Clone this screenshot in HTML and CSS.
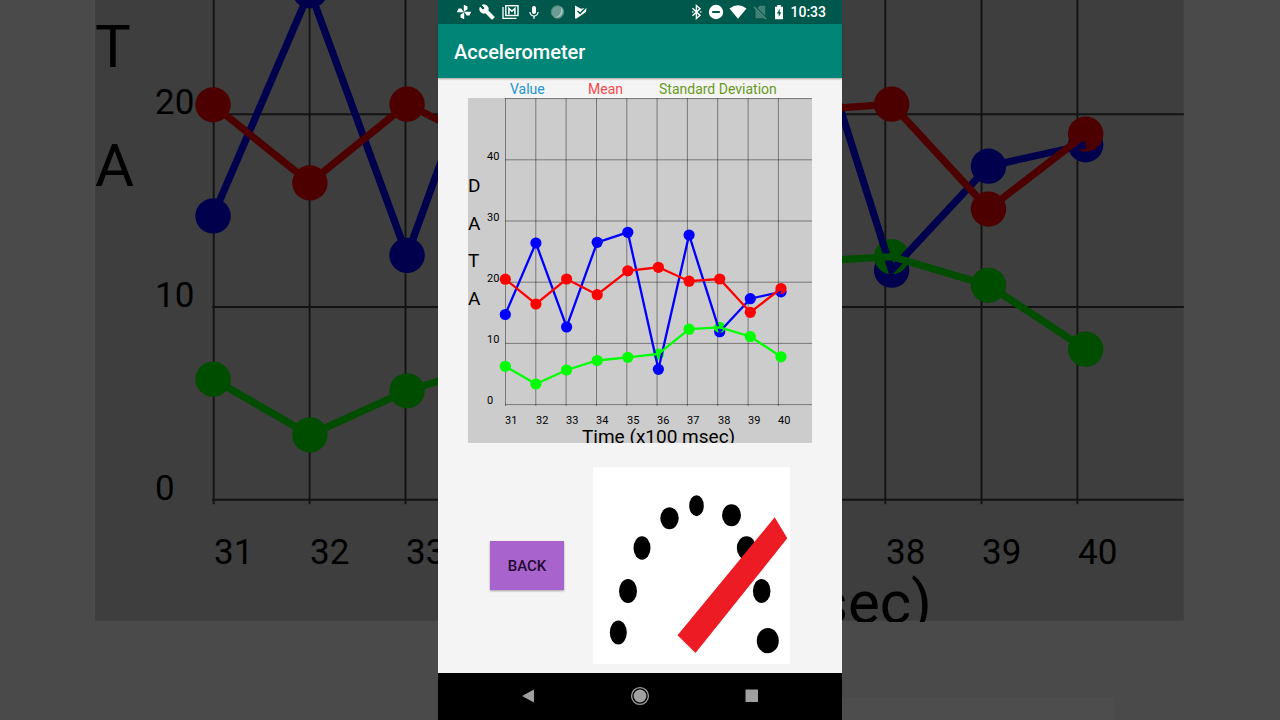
FILE: index.html
```html
<!DOCTYPE html>
<html lang="en">
<head>
<meta charset="utf-8">
<meta name="viewport" content="width=device-width, initial-scale=1">
<title>Accelerometer</title>
<link rel="stylesheet" href="styles.css">
</head>
<body>
<div class="stage">
  <svg class="backdrop" viewBox="0 0 1280 720" preserveAspectRatio="xMidYMid slice" aria-hidden="true">
    <rect width="1280" height="720" fill="#f4f4f4"/>
    <use href="#plot" transform="matrix(3.165 0 0 3.150 95 -466)"/>
    <rect x="491" y="697" width="623" height="23" fill="#fff"/>
    <g class="backdrop-name">
      <text x="95" y="67">T</text>
      <text x="95" y="186">A</text>
      <text x="932" y="623" text-anchor="end">msec)</text>
    </g>
    <g class="backdrop-tick">
      <text x="155" y="114">20</text>
      <text x="155" y="307">10</text>
      <text x="155" y="500">0</text>
      <text x="214" y="564">31</text>
      <text x="310" y="564">32</text>
      <text x="406" y="564">33</text>
      <text x="886" y="564">38</text>
      <text x="982" y="564">39</text>
      <text x="1078" y="564">40</text>
    </g>
    <rect x="0" y="622" width="1280" height="75" fill="#f4f4f4"/>
  </svg>

  <div class="phone">
    <div class="status-bar">
      <div class="status-group status-notes">
        <svg width="16" height="16" viewBox="0 0 16 16" fill="#fff"><path d="M7.800 7.800V.800l3.700 1.800v2.700zM8.200 7.800h7l-1.800 3.700h-2.700zM8.200 8.200v7l-3.700-1.800v-2.700zM7.800 8.200h-7l1.800-3.700h2.700z"/></svg>
        <svg width="16" height="16" viewBox="0 0 24 24" fill="#fff"><path d="M22.700 19l-9.100-9.100c.9-2.300.4-5-1.500-6.900-2-2-5-2.400-7.400-1.300L9 6 6 9 1.600 4.700C.4 7.100.9 10.100 2.900 12.100c1.900 1.900 4.600 2.400 6.900 1.500l9.100 9.100c.4.4 1 .4 1.400 0l2.300-2.300c.5-.4.500-1.100.100-1.400z" stroke="#fff"/></svg>
        <svg width="17" height="16" viewBox="0 0 17 16" fill="none" stroke="#fff"><path d="M1 3v11.300h13.500" stroke-width="1.300"/><rect x="3.800" y="1.700" width="12.200" height="9.800" stroke-width="1.400"/><path d="M6.900 10.500V4.500l3 2.800 3-2.800v6" stroke-width="1.500"/></svg>
        <svg width="16" height="16" viewBox="0 0 24 24" fill="#fff"><path d="M12 15c1.700 0 3-1.300 3-3V6c0-1.700-1.300-3-3-3S9 4.300 9 6v6c0 1.700 1.300 3 3 3zm5.300-3c0 3-2.500 5.100-5.300 5.100S6.700 15 6.700 12H5c0 3.400 2.700 6.200 6 6.700V22h2v-3.300c3.300-.5 6-3.300 6-6.700z"/></svg>
        <svg width="16" height="16" viewBox="0 0 16 16"><circle cx="8.500" cy="8" r="6.300" fill="#6b9c93" stroke="#4d887e"/><path d="M12 3a6.300 6.300 0 0 1-7 10c5 .5 8-4 7-10z" fill="#a9c9c3"/></svg>
        <svg width="16" height="16" viewBox="0 0 16 16"><path d="M3 1.500l6 3.200 5.500-.9L14 8 4.500 14.600H3z" fill="#fff"/><path d="M5.600 6.900l2.500 2.600 5.800-6" fill="none" stroke="#00574b" stroke-width="1.500"/></svg>
      </div>
      <div class="status-group">
        <svg width="12" height="16" viewBox="0 0 12 16" fill="none" stroke="#fff" stroke-width="1.400"><path d="M1.500 4.300l7.500 7-3.600 3.200V1.500L9 4.700l-7.500 7"/><path d="M1 7.900h1.500M9 7.900h1.500"/></svg>
        <svg width="16" height="16" viewBox="0 0 16 16"><circle cx="8" cy="8" r="7.200" fill="#fff"/><path d="M4.200 8h7.600" stroke="#00574b" stroke-width="2"/></svg>
        <svg width="18" height="16" viewBox="0 0 18 16"><path d="M.5 4.500Q9-1.800 17.500 4.500L9 14.800z" fill="#fff"/></svg>
        <svg width="16" height="16" viewBox="0 0 16 16"><path d="M5.500 4l2-2.300h5.700v10.200z M3.500 5.500l8.500 8.800H3.500z" fill="#437f76"/><path d="M2 3l12 12" stroke="#558c83" stroke-width="1.300"/></svg>
        <svg width="12" height="16" viewBox="0 0 12 16"><path d="M2 2.700h2.200V1h3.600v1.700H10v12.500H2z" fill="#fff"/><path d="M6.700 4.800L4 9.500h1.700v3.500l2.600-4.700H6.700z" fill="#00574b"/></svg>
        <time class="clock">10:33</time>
      </div>
    </div>

    <header class="app-bar"><h1 class="app-title">Accelerometer</h1></header>

    <main class="content">
      <div class="legend">
        <span class="legend-value">Value</span>
        <span class="legend-mean">Mean</span>
        <span class="legend-deviation">Standard Deviation</span>
      </div>

      <svg class="chart" viewBox="0 0 344 345" role="img" aria-label="Accelerometer data over time">
        <defs>
          <g id="plot">
            <rect width="344" height="345" fill="#ccc"/>
            <path d="M37 .6H344M37 61.800H344M37 123H344M37 184.200H344M37 245.400H344M37 306.600H344M37.500 0V308M67.800 0V308M98.100 0V308M128.500 0V308M158.800 0V308M189.100 0V308M219.400 0V308M249.700 0V308M280.100 0V308M310.400 0V308" fill="none" stroke="#000" stroke-opacity=".7" stroke-width=".6"/>
            <g fill="#00f"><circle cx="37.300" cy="216.500" r="5.600"/><circle cx="67.900" cy="145" r="5.600"/><circle cx="98.600" cy="229" r="5.600"/><circle cx="129.200" cy="144.300" r="5.600"/><circle cx="159.800" cy="134.300" r="5.600"/><circle cx="190.400" cy="271.300" r="5.600"/><circle cx="221.100" cy="137" r="5.600"/><circle cx="251.700" cy="233.700" r="5.600"/><circle cx="282.300" cy="200.700" r="5.600"/><circle cx="313" cy="193.900" r="5.600"/></g>
            <g fill="#f00"><circle cx="37.300" cy="181.200" r="5.600"/><circle cx="67.900" cy="206" r="5.600"/><circle cx="98.600" cy="181" r="5.600"/><circle cx="129.200" cy="196.700" r="5.600"/><circle cx="159.800" cy="172.800" r="5.600"/><circle cx="190.400" cy="169.300" r="5.600"/><circle cx="221.100" cy="183.200" r="5.600"/><circle cx="251.700" cy="181" r="5.600"/><circle cx="282.300" cy="214.300" r="5.600"/><circle cx="313" cy="190.500" r="5.600"/></g>
            <g fill="#0f0"><circle cx="37.300" cy="268.300" r="5.600"/><circle cx="67.900" cy="286" r="5.600"/><circle cx="98.600" cy="272" r="5.600"/><circle cx="129.200" cy="262.500" r="5.600"/><circle cx="159.800" cy="259.300" r="5.600"/><circle cx="190.400" cy="256" r="5.600"/><circle cx="221.100" cy="231.200" r="5.600"/><circle cx="251.700" cy="229.400" r="5.600"/><circle cx="282.300" cy="238.500" r="5.600"/><circle cx="313" cy="258.800" r="5.600"/></g>
            <g fill="none" stroke-width="2.300">
              <polyline stroke="#00f" points="37.300,216.500 67.900,145 98.600,229 129.200,144.300 159.800,134.300 190.400,271.300 221.100,137 251.700,233.700 282.300,200.700 313,193.900"/>
              <polyline stroke="#f00" points="37.300,181.200 67.900,206 98.600,181 129.200,196.700 159.800,172.800 190.400,169.300 221.100,183.200 251.700,181 282.300,214.300 313,190.500"/>
              <polyline stroke="#0f0" points="37.300,268.300 67.900,286 98.600,272 129.200,262.500 159.800,259.300 190.400,256 221.100,231.200 251.700,229.400 282.300,238.500 313,258.800"/>
            </g>
          </g>
        </defs>
        <use href="#plot"/>
        <g class="axis-tick">
          <text x="19" y="62">40</text>
          <text x="19" y="123">30</text>
          <text x="19" y="184">20</text>
          <text x="19" y="245">10</text>
          <text x="19" y="306">0</text>
          <text x="37" y="326">31</text>
          <text x="68" y="326">32</text>
          <text x="98" y="326">33</text>
          <text x="128" y="326">34</text>
          <text x="159" y="326">35</text>
          <text x="189" y="326">36</text>
          <text x="219" y="326">37</text>
          <text x="250" y="326">38</text>
          <text x="280" y="326">39</text>
          <text x="310" y="326">40</text>
        </g>
        <g class="axis-name">
          <text x="0" y="94">D</text>
          <text x="0" y="132">A</text>
          <text x="0" y="169">T</text>
          <text x="0" y="207">A</text>
          <text x="114" y="345">Time (x100 msec)</text>
        </g>
      </svg>

      <div class="controls">
        <button class="back-button" type="button">BACK</button>
        <svg class="gauge" viewBox="0 0 197 197" role="img" aria-label="Gauge">
          <rect width="197" height="197" fill="#fff"/>
          <ellipse cx="25.300" cy="165.500" rx="8.500" ry="12"/>
          <ellipse cx="35" cy="124" rx="9" ry="12"/>
          <ellipse cx="49" cy="81" rx="8.500" ry="11.700"/>
          <ellipse cx="76.500" cy="51.300" rx="9.200" ry="11"/>
          <ellipse cx="103.500" cy="38.700" rx="7.300" ry="10.500"/>
          <ellipse cx="138.500" cy="48.300" rx="9.500" ry="11"/>
          <ellipse cx="153.500" cy="81" rx="9.700" ry="11.700"/>
          <ellipse cx="168.700" cy="124" rx="8.800" ry="12"/>
          <ellipse cx="174.800" cy="173.700" rx="11" ry="12.600"/>
          <polygon points="181.700,50.300 194.300,71.300 102.500,186 84.500,168.300" fill="#ed1c24"/>
        </svg>
      </div>
    </main>

    <nav class="nav-bar">
      <button class="nav-button" type="button" aria-label="Back"><svg width="20" height="20" viewBox="0 0 20 20"><path d="M4 10L16 3.500v13z" fill="#a0a0a0"/></svg></button>
      <button class="nav-button" type="button" aria-label="Home"><svg width="20" height="20" viewBox="0 0 20 20"><circle cx="10" cy="10" r="8.400" fill="none" stroke="#a0a0a0" stroke-width="1.300"/><circle cx="10" cy="10" r="6.400" fill="#a0a0a0"/></svg></button>
      <button class="nav-button" type="button" aria-label="Recent apps"><svg width="20" height="20" viewBox="0 0 20 20"><rect x="3.500" y="3.500" width="12.500" height="12.500" fill="#a0a0a0"/></svg></button>
    </nav>
  </div>
</div>
</body>
</html>
```

FILE: styles.css
```css
* {
  box-sizing: border-box;
}

body {
  margin: 0;
  background: #000;
  font-family: Roboto, "Liberation Sans", sans-serif;
}

svg {
  display: block;
}

.stage {
  display: grid;
  grid-template: minmax(100vh, auto) / minmax(0, 1fr);
}

.backdrop,
.phone {
  grid-area: 1 / 1;
}

.backdrop {
  width: 100%;
  height: 100%;
  min-height: 0;
  opacity: 0.3;
  contain: size;
}

.backdrop-name {
  font-size: 60px;
}

.backdrop-tick {
  font-size: 35px;
}

.phone {
  position: relative;
  display: flex;
  flex-direction: column;
  justify-self: center;
  width: 100%;
  max-width: 404px;
  background: #f4f4f4;
}

.status-bar {
  display: flex;
  justify-content: space-between;
  align-items: center;
  height: 24px;
  padding: 0 16px 0 18px;
  background: #00574b;
}

.status-group {
  display: flex;
  align-items: center;
  gap: 5px;
}

.status-notes {
  gap: 7px;
}

.clock {
  color: #fff;
  font-size: 14px;
  font-weight: 500;
  line-height: 24px;
}

.app-bar {
  display: flex;
  align-items: center;
  height: 54px;
  padding: 2px 16px 0;
  background: #008577;
  box-shadow: 0 1px 2px rgba(0, 0, 0, 0.35);
}

.app-title {
  margin: 0;
  color: #fff;
  font-size: 20px;
  font-weight: 500;
  line-height: 24px;
}

.content {
  flex: 1;
}

.legend {
  display: grid;
  grid-template-columns: 78px 71px auto;
  padding: 2px 0 0 72px;
  font-size: 14px;
  line-height: 18px;
  white-space: nowrap;
}

.legend-value {
  color: #2196cf;
}

.legend-mean {
  color: #f44a4a;
}

.legend-deviation {
  color: #6a9a1f;
}

.chart {
  width: calc(100% - 60px);
  margin: 0 30px;
}

.axis-tick {
  font-size: 11px;
}

.axis-name {
  font-size: 19px;
}

.controls {
  display: flex;
  justify-content: center;
  align-items: center;
  gap: 29px;
  padding: 24px 0 9px;
}

.back-button {
  width: 74px;
  height: 49px;
  padding: 0;
  border: 0;
  background: #a864cc;
  box-shadow: 0 1px 2px rgba(0, 0, 0, 0.35);
  color: #220a33;
  font-family: inherit;
  font-size: 15px;
  font-weight: 500;
}

.gauge {
  width: 197px;
}

.nav-bar {
  display: flex;
  justify-content: center;
  height: 47px;
  padding-bottom: 2px;
  background: #000;
}

.nav-button {
  display: grid;
  place-items: center;
  width: 112px;
  padding: 0;
  border: 0;
  background: none;
}
```
